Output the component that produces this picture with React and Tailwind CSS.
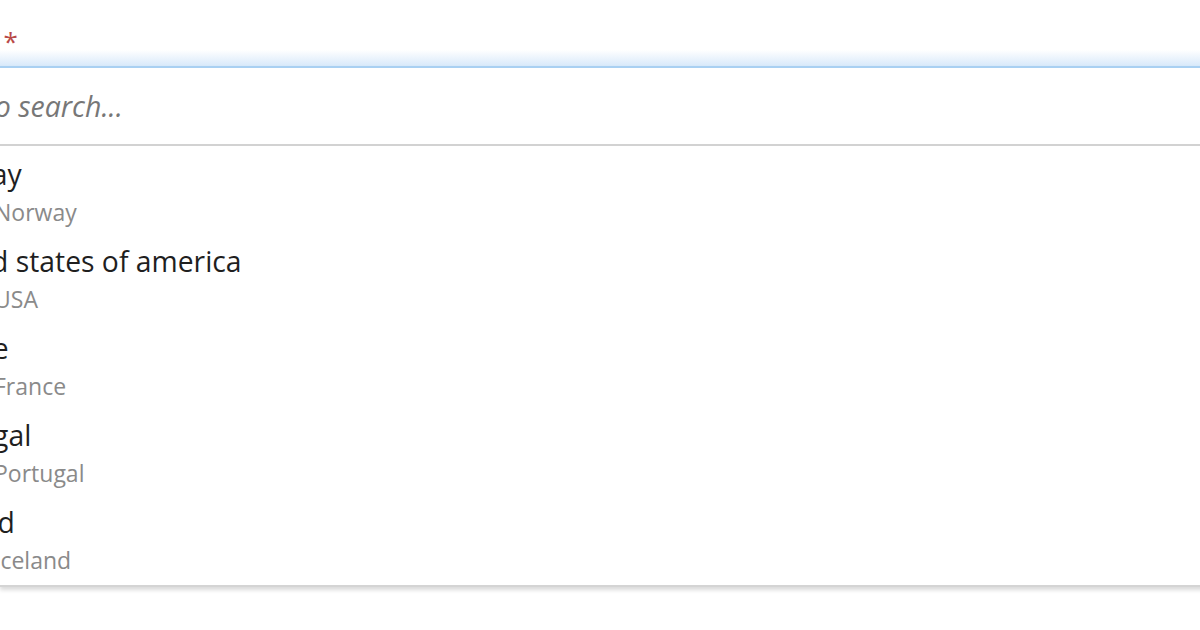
import React from 'react';

const countries = [
    { name: 'Norway', code: 'Norway' },
    { name: 'United states of america', code: 'USA' },
    { name: 'France', code: 'France' },
    { name: 'Portugal', code: 'Portugal' },
    { name: 'Iceland', code: 'Iceland' },
];

const App = () => {
    return (
        <div className="w-[1200px] h-[630px] bg-white overflow-hidden" style={{ fontFamily: '"Open Sans", sans-serif' }}>
            {/* field label, mostly scrolled off to the left */}
            <div className="h-[50px] pt-[26px] -ml-[100px] text-[26px] leading-[30px] text-[#333] whitespace-nowrap">
                Country <span className="text-[#b94a48]">*</span>
            </div>

            {/* focus glow of the input */}
            <div className="h-[16px] bg-gradient-to-b from-white to-[#d8e9fa]" />

            <div className="-mr-[20px] pb-[4px] border-t-2 border-b-2 border-t-[#a9d0f2] border-b-[#d4d4d4] shadow-[0_3px_4px_rgba(0,0,0,0.15)]">
                {/* search box */}
                <div className="h-[78px] flex items-center border-b-2 border-[#d2d2d2]">
                    <span className="-ml-[80px] text-[28.5px] italic text-[#777] whitespace-nowrap">Type to search...</span>
                </div>

                {/* options */}
                <ul className="-ml-[80px]">
                    {countries.map((c) => (
                        <li key={c.name} className="h-[87px] pt-[11px] flex flex-col whitespace-nowrap">
                            <span className="text-[28.3px] leading-[34px] text-[#1f1f1f]">{c.name}</span>
                            <span className="mt-[7px] ml-[74px] text-[23px] leading-[28px] text-[#8a8a8a]">{c.code}</span>
                        </li>
                    ))}
                </ul>
            </div>
        </div>
    );
};

export default App;
